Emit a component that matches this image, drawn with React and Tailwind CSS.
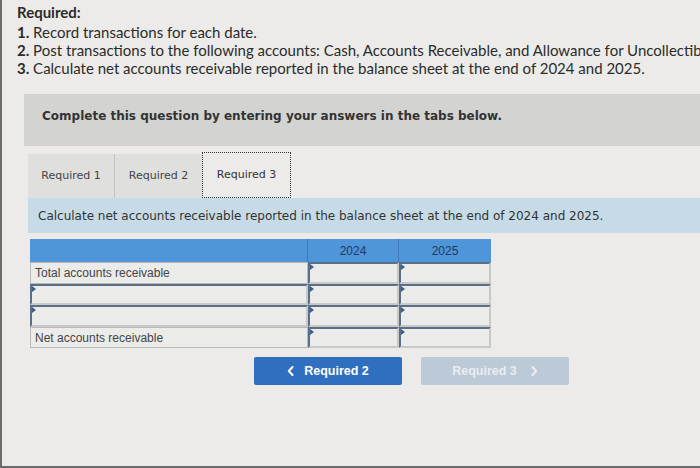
import React from "react";

function Cell({ input, label, className = "" }) {
  if (input) {
    return (
      <div className={`relative h-full border-2 border-t-[#5a6e86] border-l-[#5a6e86] border-r-[#c9c9c9] border-b-[#c9c9c9] bg-[#ebebea] ${className}`}>
        <span className="absolute left-0 top-0 h-0 w-0 border-y-[3px] border-l-[4px] border-y-transparent border-l-[#3b5f8f]" />
      </div>
    );
  }
  return (
    <div className={`flex h-full items-center border border-[#b9b9b9] bg-[#ebebea] px-1 pt-[1px] text-[12px] text-[#444] ${className}`}>
      {label}
    </div>
  );
}

function Chevron({ dir = "left" }) {
  return (
    <svg width="7" height="10" viewBox="0 0 7 10" fill="none">
      <path
        d={dir === "left" ? "M5.5 1 L1.8 5 L5.5 9" : "M1.5 1 L5.2 5 L1.5 9"}
        stroke="currentColor"
        strokeWidth="2"
        strokeLinecap="round"
        strokeLinejoin="round"
      />
    </svg>
  );
}

export default function App() {
  const rows = [
    { label: "Total accounts receivable", input: false },
    { label: "", input: true },
    { label: "", input: true },
    { label: "Net accounts receivable", input: false },
  ];

  return (
    <div className="h-[468px] w-[700px] overflow-hidden border-b-2 border-l-2 border-[#6b6b6b] bg-[#ecebe9]">
      <div className="overflow-hidden whitespace-nowrap pl-[15px] pt-[3px] text-[15px] leading-[18px] text-[#2b2b2b]" style={{ fontFamily: "Lato, 'Open Sans', sans-serif" }}>
        <div className="mb-[2px] font-bold">Required:</div>
        <div><b>1.</b> Record transactions for each date.</div>
        <div><b>2.</b> Post transactions to the following accounts: Cash, Accounts Receivable, and Allowance for Uncollectible</div>
        <div><b>3.</b> Calculate net accounts receivable reported in the balance sheet at the end of 2024 and 2025.</div>
      </div>

      <div className="ml-[22px] mt-[17px]" style={{ fontFamily: "'DejaVu Sans', Verdana, sans-serif" }}>
        <div className="flex h-[52px] items-center bg-[#d3d3d2] pb-[8px] pl-[18px] text-[12px] font-bold text-[#333]">
          Complete this question by entering your answers in the tabs below.
        </div>

        <div className="ml-[4px] mt-[7px] flex h-[45px] items-end">
          <div className="flex h-[44px] w-[87px] items-center justify-center border-r border-[#c4c4c4] bg-[#dfdfde] text-[11px] text-[#444]">Required 1</div>
          <div className="flex h-[44px] w-[87px] items-center justify-center bg-[#dfdfde] text-[11px] text-[#444]">Required 2</div>
          <div className="flex h-[46px] w-[89px] items-center justify-center border border-dotted border-[#333] bg-[#ecebea] text-[11px] text-[#333]">Required 3</div>
        </div>

        <div className="ml-[4px] flex h-[35px] items-center bg-[#c6dbe5] pl-[10px] text-[12px] text-[#333]">
          Calculate net accounts receivable reported in the balance sheet at the end of 2024 and 2025.
        </div>

        <div className="ml-[6px] mt-[6px] w-[461px]" style={{ fontFamily: "'Liberation Sans', Arial, sans-serif" }}>
          <div className="grid h-[23px] grid-cols-[278px_91px_92px] bg-[#4f95da] text-[12px] text-[#1d3b63]">
            <div className="border-r border-[#3c7abd]" />
            <div className="flex items-center justify-center border-r border-[#3c7abd]">2024</div>
            <div className="flex items-center justify-center">2025</div>
          </div>
          {rows.map((r, i) => (
            <div key={i} className="grid h-[21.5px] grid-cols-[278px_91px_92px]">
              <Cell input={r.input} label={r.label} />
              <Cell input />
              <Cell input />
            </div>
          ))}
        </div>

        <div className="mt-[9px] flex gap-[19px] pl-[230px]" style={{ fontFamily: "'Liberation Sans', Arial, sans-serif" }}>
          <div className="flex h-[28px] w-[148px] items-center justify-center gap-[10px] rounded-[2px] bg-[#2f6fc0] text-[12.5px] font-bold text-white">
            <Chevron dir="left" />
            <span>Required 2</span>
          </div>
          <div className="flex h-[28px] w-[148px] items-center justify-center gap-[14px] rounded-[2px] bg-[#bccad7] text-[12.5px] font-bold text-[#e8edf2]">
            <span>Required 3</span>
            <Chevron dir="right" />
          </div>
        </div>
      </div>
    </div>
  );
}
